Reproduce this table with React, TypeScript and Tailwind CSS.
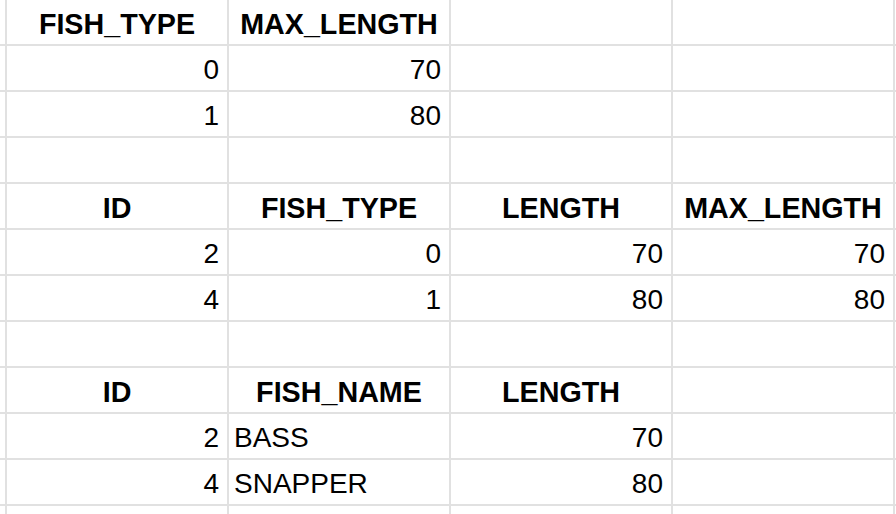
const rows: { v: string; kind?: "h" | "n" | "t" }[][] = [
  [{ v: "FISH_TYPE", kind: "h" }, { v: "MAX_LENGTH", kind: "h" }, { v: "" }, { v: "" }],
  [{ v: "0", kind: "n" }, { v: "70", kind: "n" }, { v: "" }, { v: "" }],
  [{ v: "1", kind: "n" }, { v: "80", kind: "n" }, { v: "" }, { v: "" }],
  [{ v: "" }, { v: "" }, { v: "" }, { v: "" }],
  [
    { v: "ID", kind: "h" },
    { v: "FISH_TYPE", kind: "h" },
    { v: "LENGTH", kind: "h" },
    { v: "MAX_LENGTH", kind: "h" },
  ],
  [{ v: "2", kind: "n" }, { v: "0", kind: "n" }, { v: "70", kind: "n" }, { v: "70", kind: "n" }],
  [{ v: "4", kind: "n" }, { v: "1", kind: "n" }, { v: "80", kind: "n" }, { v: "80", kind: "n" }],
  [{ v: "" }, { v: "" }, { v: "" }, { v: "" }],
  [{ v: "ID", kind: "h" }, { v: "FISH_NAME", kind: "h" }, { v: "LENGTH", kind: "h" }, { v: "" }],
  [{ v: "2", kind: "n" }, { v: "BASS", kind: "t" }, { v: "70", kind: "n" }, { v: "" }],
  [{ v: "4", kind: "n" }, { v: "SNAPPER", kind: "t" }, { v: "80", kind: "n" }, { v: "" }],
  [{ v: "" }, { v: "" }, { v: "" }, { v: "" }],
];

function Cell({ v, kind }: { v: string; kind?: "h" | "n" | "t" }) {
  const align =
    kind === "h"
      ? "justify-center font-bold text-[28.7px]"
      : kind === "n"
        ? "justify-end pr-[8px]"
        : "justify-start pl-[5px]";
  return (
    <div className={`flex items-end bg-white pb-[4px] overflow-hidden ${align}`}>
      <span className="leading-[32px] whitespace-nowrap">{v}</span>
    </div>
  );
}

export default function App() {
  return (
    <div
      className="w-[896px] h-[514px] overflow-hidden bg-white text-black text-[28px]"
      style={{ fontFamily: '"Liberation Sans", Arial, sans-serif' }}
    >
      <div className="grid grid-cols-[5px_220px_220px_220px_220px_1px] auto-rows-[44px] gap-[2px] bg-[#e1e1e1]">
        {rows.map((r, i) => (
          <div key={i} className="contents">
            <div className="bg-white" />
            {r.map((c, j) => (
              <Cell key={j} v={c.v} kind={c.kind} />
            ))}
            <div className="bg-white" />
          </div>
        ))}
      </div>
    </div>
  );
}
